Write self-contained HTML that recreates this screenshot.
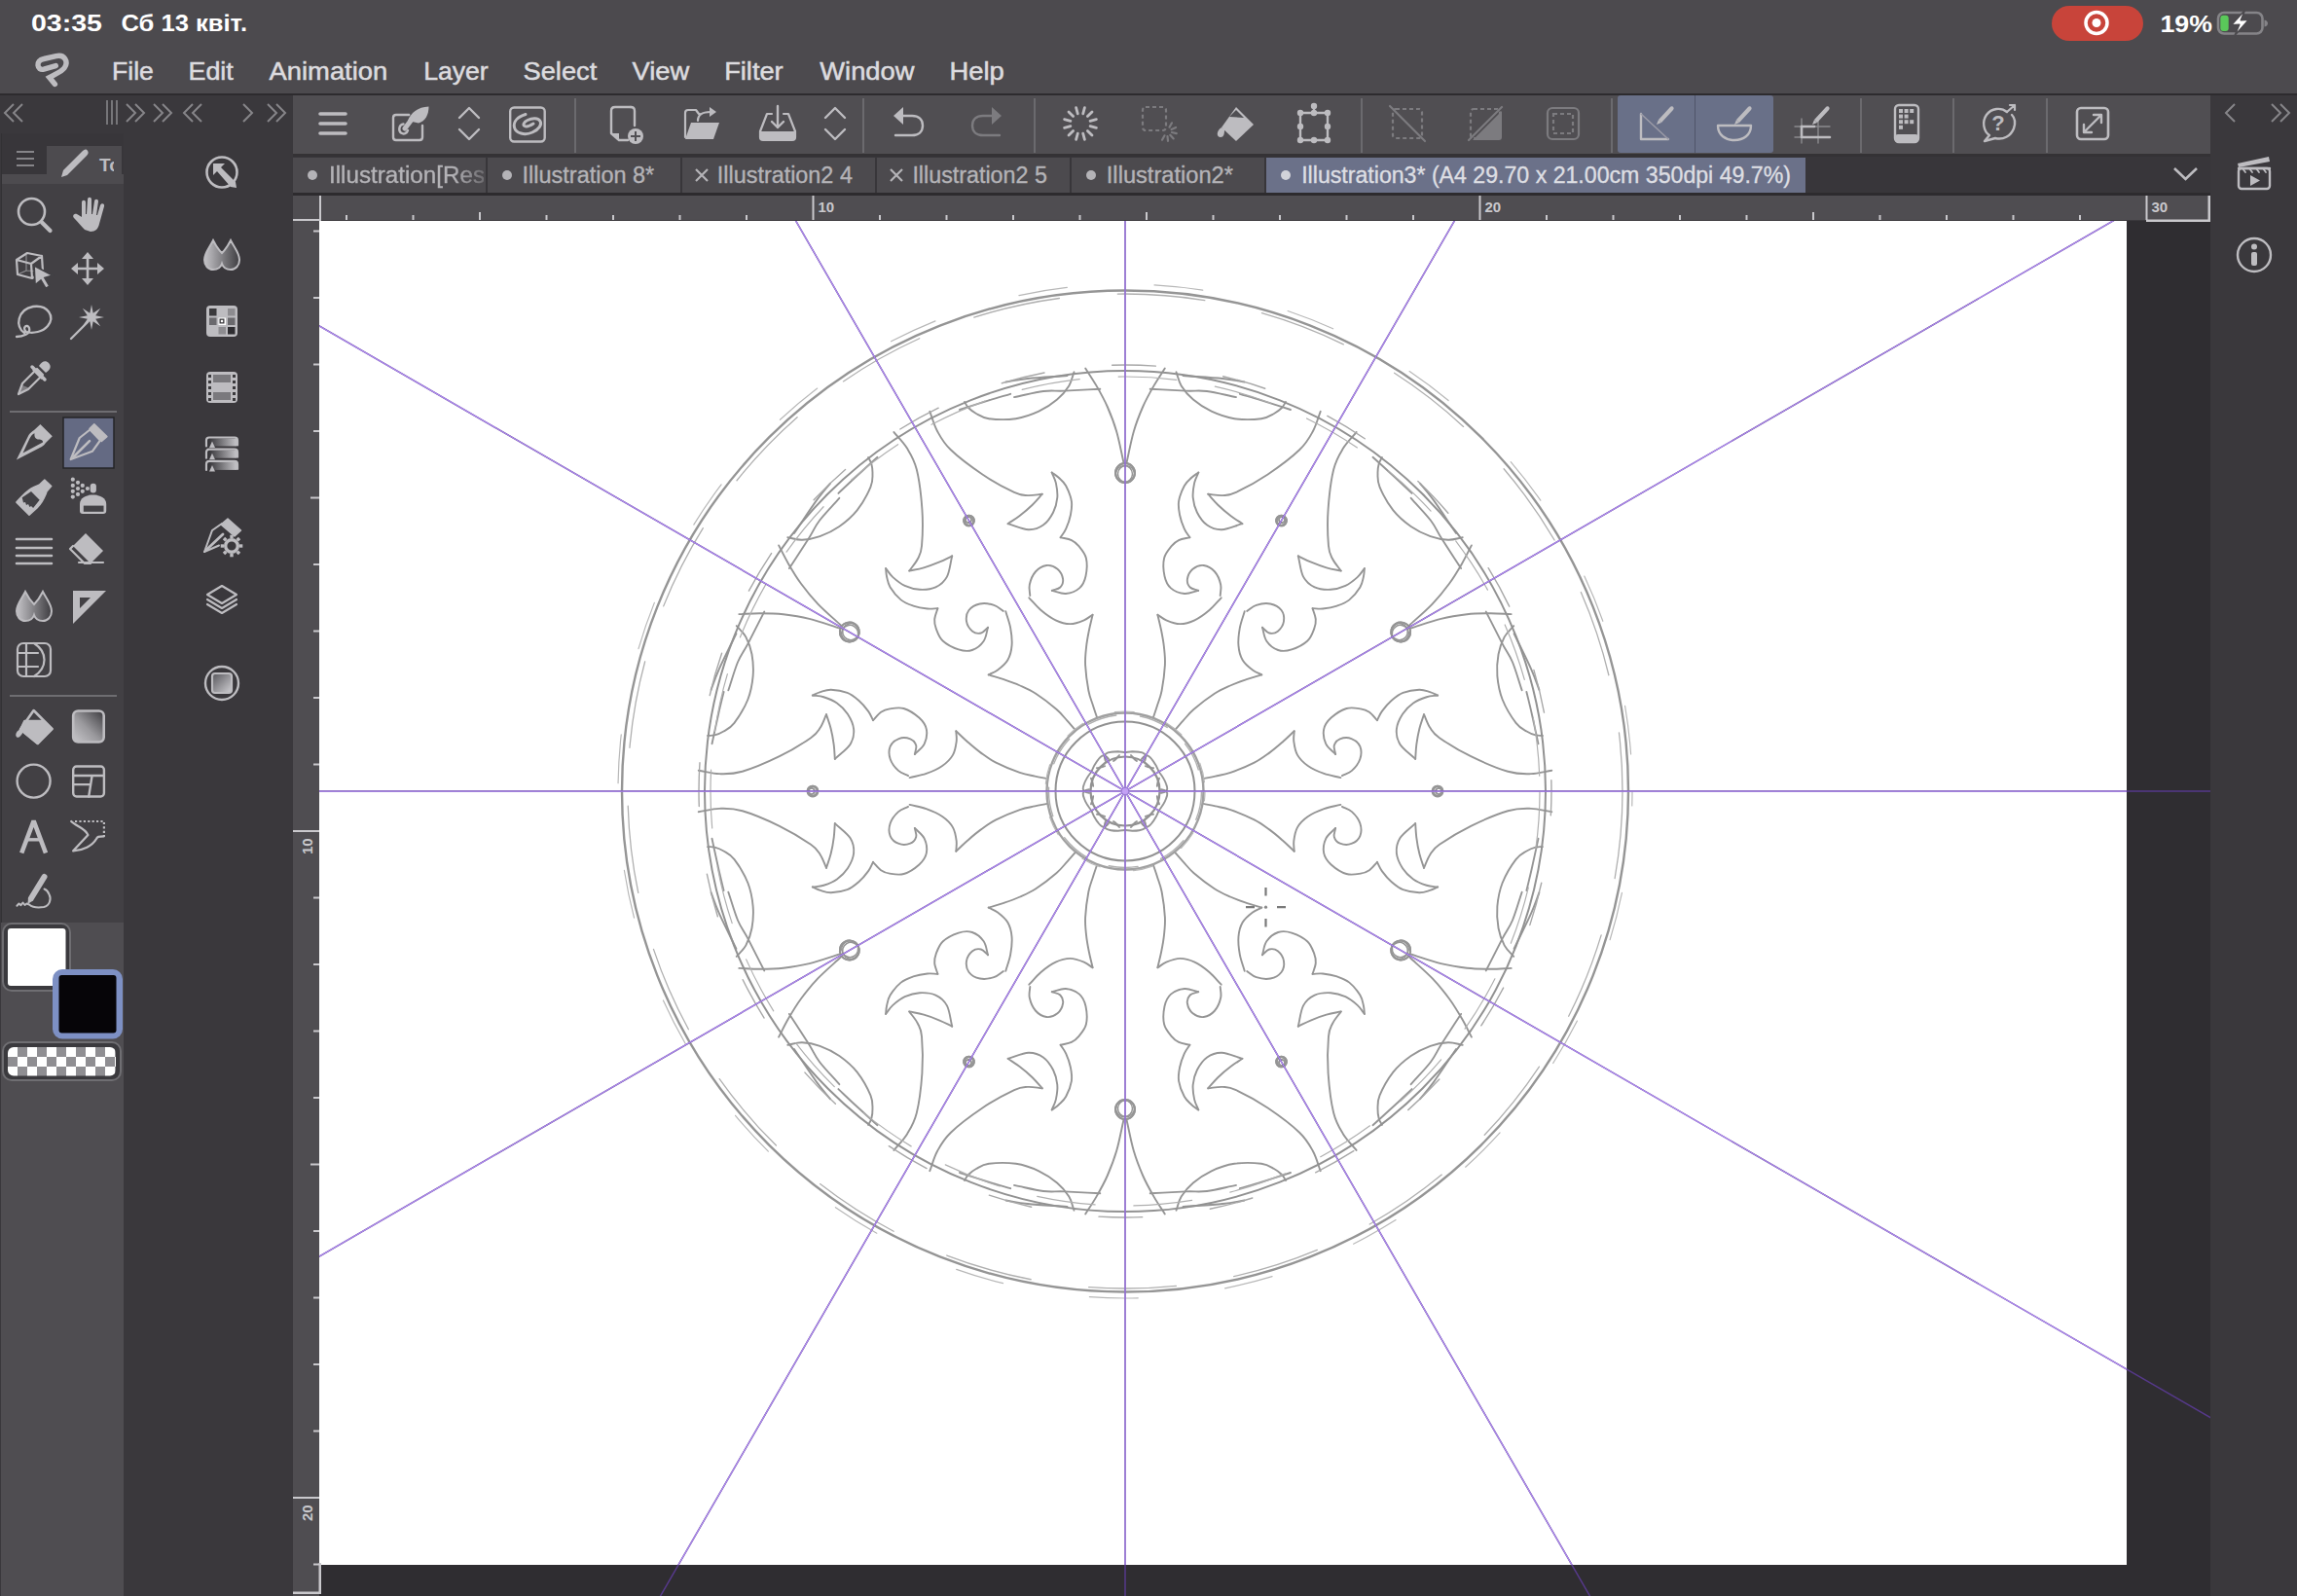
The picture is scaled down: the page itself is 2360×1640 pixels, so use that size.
<!DOCTYPE html>
<html><head><meta charset="utf-8"><style>
html,body{margin:0;padding:0;background:#3a383c;overflow:hidden;width:2360px;height:1640px}
svg{display:block}
text{font-family:"Liberation Sans",sans-serif}
</style></head><body>
<svg width="2360" height="1640" viewBox="0 0 2360 1640">
<rect x="0" y="0" width="2360" height="97" fill="#4c4a4e" />
<rect x="0" y="96" width="2360" height="2" fill="#2d2b2e" />
<rect x="0" y="98" width="2360" height="1542" fill="#3a383c" />
<defs><linearGradient id="gdrop" x1="0" y1="0" x2="1" y2="0"><stop offset="0" stop-color="#c4c3c7"/><stop offset="1" stop-color="#3e3d41"/></linearGradient>
<linearGradient id="gsq" x1="0" y1="0" x2="1" y2="1"><stop offset="0" stop-color="#56555a"/><stop offset="1" stop-color="#d0cfd3"/></linearGradient>
<linearGradient id="gsq2" x1="0" y1="1" x2="1" y2="0"><stop offset="0" stop-color="#c8c7cb"/><stop offset="0.45" stop-color="#9a999d"/><stop offset="1" stop-color="#3a393d"/></linearGradient>
<linearGradient id="gbar" x1="0" y1="0" x2="1" y2="0"><stop offset="0" stop-color="#2e2d31"/><stop offset="1" stop-color="#c4c3c7"/></linearGradient>
<pattern id="chk" x="8" y="1076" width="20" height="20" patternUnits="userSpaceOnUse"><rect width="20" height="20" fill="#ffffff"/><rect x="10" y="0" width="10" height="10" fill="#8f8e92"/><rect x="0" y="10" width="10" height="10" fill="#8f8e92"/></pattern></defs>
<text x="32" y="32" font-size="24" fill="#ffffff" font-weight="bold" textLength="73" lengthAdjust="spacingAndGlyphs">03:35</text>
<text x="124.5" y="32" font-size="24" fill="#ffffff" font-weight="bold" textLength="129.5" lengthAdjust="spacingAndGlyphs">Сб 13 квіт.</text>
<rect x="2108" y="6" width="94" height="36" rx="18" fill="#c8443a"/>
<circle cx="2154" cy="23.5" r="11" fill="none" stroke="#fff" stroke-width="3.5"/><circle cx="2154" cy="23.5" r="4.5" fill="#fff"/>
<text x="2219.5" y="33" font-size="24" fill="#ffffff" font-weight="bold" textLength="53.5" lengthAdjust="spacingAndGlyphs">19%</text>
<rect x="2279" y="13" width="45.5" height="21.5" rx="6" fill="none" stroke="#858488" stroke-width="2.6"/>
<path d="M2326.5 20.5 C2329 21 2330 22.5 2330 24 C2330 25.5 2329 27 2326.5 27.5 Z" fill="#858488"/>
<rect x="2281.3" y="15.7" width="8.4" height="16.2" rx="3" fill="#5ac85a"/>
<path d="M2306.5 10.5 L2292.5 25.8 L2300.8 25.2 L2296 36.5 L2310.5 20.2 L2302.3 20.8 Z" fill="#ffffff" stroke="#4c4a4e" stroke-width="1.6" stroke-linejoin="round"/>
<path d="M57.3 67.6 L45 71.2 C38 73 36 62 45 60.5 L57.6 57.6 C66 55.5 71 63 66 70 C63.5 73.5 58 75.5 50.7 79.6 L56.4 86.4" fill="none" stroke="#bdbcc0" stroke-width="5.4" stroke-linecap="round" stroke-linejoin="miter"/>
<text x="115.1" y="82" font-size="25" fill="#dcdbdf" font-weight="normal" stroke="#dcdbdf" stroke-width="0.5" textLength="42.8" lengthAdjust="spacingAndGlyphs">File</text>
<text x="193.5" y="82" font-size="25" fill="#dcdbdf" font-weight="normal" stroke="#dcdbdf" stroke-width="0.5" textLength="46.3" lengthAdjust="spacingAndGlyphs">Edit</text>
<text x="276.6" y="82" font-size="25" fill="#dcdbdf" font-weight="normal" stroke="#dcdbdf" stroke-width="0.5" textLength="121.6" lengthAdjust="spacingAndGlyphs">Animation</text>
<text x="435.2" y="82" font-size="25" fill="#dcdbdf" font-weight="normal" stroke="#dcdbdf" stroke-width="0.5" textLength="66.5" lengthAdjust="spacingAndGlyphs">Layer</text>
<text x="537.5999999999999" y="82" font-size="25" fill="#dcdbdf" font-weight="normal" stroke="#dcdbdf" stroke-width="0.5" textLength="75.6" lengthAdjust="spacingAndGlyphs">Select</text>
<text x="649.4" y="82" font-size="25" fill="#dcdbdf" font-weight="normal" stroke="#dcdbdf" stroke-width="0.5" textLength="58.8" lengthAdjust="spacingAndGlyphs">View</text>
<text x="744.1999999999999" y="82" font-size="25" fill="#dcdbdf" font-weight="normal" stroke="#dcdbdf" stroke-width="0.5" textLength="60.5" lengthAdjust="spacingAndGlyphs">Filter</text>
<text x="842.3" y="82" font-size="25" fill="#dcdbdf" font-weight="normal" stroke="#dcdbdf" stroke-width="0.5" textLength="97.2" lengthAdjust="spacingAndGlyphs">Window</text>
<text x="975.4" y="82" font-size="25" fill="#dcdbdf" font-weight="normal" stroke="#dcdbdf" stroke-width="0.5" textLength="56.4" lengthAdjust="spacingAndGlyphs">Help</text>
<path d="M14 107 L5 116 L14 125" fill="none" stroke="#868589" stroke-width="2"/><path d="M23 107 L14 116 L23 125" fill="none" stroke="#868589" stroke-width="2"/>
<path d="M130 107 L139 116 L130 125" fill="none" stroke="#868589" stroke-width="2"/><path d="M139 107 L148 116 L139 125" fill="none" stroke="#868589" stroke-width="2"/>
<path d="M158 107 L167 116 L158 125" fill="none" stroke="#868589" stroke-width="2"/><path d="M167 107 L176 116 L167 125" fill="none" stroke="#868589" stroke-width="2"/>
<path d="M198 107 L189 116 L198 125" fill="none" stroke="#868589" stroke-width="2"/><path d="M207 107 L198 116 L207 125" fill="none" stroke="#868589" stroke-width="2"/>
<path d="M250 107 L259 116 L250 125" fill="none" stroke="#868589" stroke-width="2"/>
<path d="M275 107 L284 116 L275 125" fill="none" stroke="#868589" stroke-width="2"/><path d="M284 107 L293 116 L284 125" fill="none" stroke="#868589" stroke-width="2"/>
<path d="M110 103 L110 128 M115 103 L115 128 M120 103 L120 128" stroke="#868589" stroke-width="1.6"/>
<path d="M2296 107 L2287 116 L2296 125" fill="none" stroke="#868589" stroke-width="2"/>
<path d="M2334 107 L2343 116 L2334 125" fill="none" stroke="#868589" stroke-width="2"/><path d="M2343 107 L2352 116 L2343 125" fill="none" stroke="#868589" stroke-width="2"/>
<rect x="1" y="137" width="126" height="1503" fill="#424044" />
<rect x="1" y="137" width="126" height="42" fill="#38363a" />
<rect x="48" y="150" width="77" height="29" fill="#4d4b4f" />
<rect x="1" y="179" width="126" height="10" fill="#4d4b4f" />
<rect x="1" y="137" width="1" height="1503" fill="#323134" />
<path d="M17 156 L35 156 M17 163 L35 163 M17 170 L35 170" stroke="#868589" stroke-width="2"/>
<path d="M63 182 L65 175 L85 155 C87 153 89 153 90 155 C91 156 91 158 89 160 L69 180 Z" fill="#bdbcc0"/>
<clipPath id="tabT"><rect x="95" y="150" width="22" height="29"/></clipPath>
<text x="102" y="176" font-size="19" fill="#bdbcc0" font-weight="bold" clip-path="url(#tabT)">Tc</text>
<rect x="10" y="422" width="110" height="2" fill="#6e6d71" />
<rect x="10" y="714" width="110" height="2" fill="#6e6d71" />
<rect x="65" y="429" width="52" height="52" fill="#646a83" stroke="#252427" stroke-width="1.5"/>
<g transform="translate(35,220)" ><circle cx="-2.5" cy="-2.5" r="13.5" fill="none" stroke="#bdbcc0" stroke-width="2.6" stroke-linecap="round" stroke-linejoin="round"/><path d="M8 8.5 L16.5 17" fill="none" stroke="#bdbcc0" stroke-width="4.2" stroke-linecap="round" stroke-linejoin="round"/></g>
<g transform="translate(90,222)" ><path d="M-3 14 C-7 10 -10 6 -14 2 C-16 0 -14 -3 -11 -2 L-6 1 L-6 -14 C-6 -17 -2 -17 -2 -14 L-2 -2 L-1 -2 L0 -17 C0 -20 4 -20 4 -17 L4 -2 L5 -2 L7 -15 C7 -18 11 -18 11 -15 L9 -1 L10 -1 L13 -11 C14 -14 18 -13 17 -10 L12 8 C11 13 8 16 3 16 Z" fill="#bdbcc0"/></g>
<g transform="translate(35,276)" ><path d="M-18 -9 L-7 -16 L8 -13 L9 3 L-2 10 L-17 6 Z M-18 -9 L-3 -5 L8 -13 M-3 -5 L-2 10" fill="none" stroke="#bdbcc0" stroke-width="2.2" stroke-linecap="round" stroke-linejoin="round"/><path d="M-8 -14 L-8 2 L-17 6 M-8 2 L9 3" stroke="#bdbcc0" stroke-width="1.2" opacity="0.6" fill="none"/><path d="M0 -3 L19 7 L11 9.5 L16 18 L12 20.5 L7 12 L1 17 Z" fill="#bdbcc0" stroke="#424145" stroke-width="1.8"/></g>
<g transform="translate(90,276)" ><path d="M0 -17 L-6 -10 L6 -10 Z M0 17 L-6 10 L6 10 Z M-17 0 L-10 -6 L-10 6 Z M17 0 L10 -6 L10 6 Z" fill="#bdbcc0"/><path d="M0 -11 L0 11 M-11 0 L11 0" fill="none" stroke="#bdbcc0" stroke-width="2.6" stroke-linecap="round" stroke-linejoin="round"/></g>
<g transform="translate(35,332)" ><path d="M-10 10 C-20 4 -17 -14 -1 -17 C14 -19 22 -7 14 3 C9 9 -1 11 -8 9 C-13 5 -7 0 -5 5 C-3 11 -12 14 -18 14" fill="none" stroke="#bdbcc0" stroke-width="2.3" stroke-linecap="round" stroke-linejoin="round"/></g>
<g transform="translate(90,331)" ><path d="M17.0 -5.0 L8.2 -3.3 L13.2 4.2 L5.7 -0.8 L4.0 8.0 L2.3 -0.8 L-5.2 4.2 L-0.2 -3.3 L-9.0 -5.0 L-0.2 -6.7 L-5.2 -14.2 L2.3 -9.2 L4.0 -18.0 L5.7 -9.2 L13.2 -14.2 L8.2 -6.7 Z" fill="#bdbcc0"/><path d="M0 0 L-17 17" fill="none" stroke="#bdbcc0" stroke-width="2.3" stroke-linecap="round" stroke-linejoin="round"/></g>
<g transform="translate(35,388)" ><path d="M-16 17 L-12 6 L3 -9 L9 -3 L-6 12 Z" fill="none" stroke="#bdbcc0" stroke-width="2.2" stroke-linecap="round" stroke-linejoin="round"/><path d="M-15 16 L-12 8 L-4 11 Z" fill="#bdbcc0" opacity="0.5"/><path d="M0 -8 L8 0 M-2 -11 L11 2" fill="none" stroke="#bdbcc0" stroke-width="3.5" stroke-linecap="round" stroke-linejoin="round"/><path d="M5 -12 C8 -17 12 -18 15 -15 C18 -12 17 -8 12 -5 Z" fill="#bdbcc0"/></g>
<g transform="translate(35,454)" ><path d="M-18.1 18.4 L-5.5 -7 C-4 -9 -2 -11 0 -12 L6.4 -18.1 L18.8 -5.7 L12 1 C10 4 8 5 6 6 Z M-11.5 11.5 L-4.5 -3.5 C-3.5 -5.5 -1.5 -8.5 0.5 -8.8 C0 -5 1.5 -2.5 5 -2.5 C7 -2.5 9.5 -1.5 9 0.5 Z" fill="#bdbcc0" fill-rule="evenodd"/></g>
<g transform="translate(91,454)" ><path d="M-18.3 18 L-9.3 -4 L1.5 -12.5 L12 -1.5 L3.8 9.8 Z" fill="none" stroke="#bdbcc0" stroke-width="2.2" stroke-linejoin="round"/><path d="M1 -13.5 L5.8 -18.3 L18.9 -5.4 L13.4 -0.6 Z" fill="#bdbcc0" stroke="#bdbcc0" stroke-width="1.5" stroke-linejoin="round"/><path d="M-15 15 L1 -0.9" fill="none" stroke="#bdbcc0" stroke-width="2.6" stroke-linecap="round" stroke-linejoin="round"/></g>
<g transform="translate(35,511)" ><path d="M-18.1 5.1 C-12 -2 -6 -8 0 -10.5 L5.3 -12.8 L10.8 -17.9 L17.7 -11.4 L13 -6 C11 0 8 6 3 11 L-5 18.2 Z" fill="#bdbcc0" stroke="#bdbcc0" stroke-width="1.5" stroke-linejoin="round"/><path d="M-12.3 0.3 L-3 -5.9 L5.7 2.7 L-0.9 11 L-3 9 L-4.5 10 L-6 7 L-8 8 L-9 5 L-11 5.5 Z" fill="#424145"/></g>
<g transform="translate(90,510)" ><circle cx="-15.2" cy="-17.3" r="2.1" fill="#bdbcc0"/><circle cx="-10" cy="-14.2" r="2.1" fill="#bdbcc0"/><circle cx="-15.2" cy="-11.1" r="2.1" fill="#bdbcc0"/><circle cx="-5.2" cy="-11.1" r="2.1" fill="#bdbcc0"/><circle cx="-10" cy="-8" r="2.1" fill="#bdbcc0"/><circle cx="-0.1" cy="-8" r="2.1" fill="#bdbcc0"/><circle cx="-15.2" cy="-5.2" r="2.1" fill="#bdbcc0"/><circle cx="-5.2" cy="-5.2" r="2.1" fill="#bdbcc0"/><circle cx="-10" cy="-2.1" r="2.1" fill="#bdbcc0"/><circle cx="-15.2" cy="0.6" r="2.1" fill="#bdbcc0"/><rect x="2.7" y="-13.2" width="6.2" height="9.7" rx="3" fill="#bdbcc0"/><path d="M-8 15 L-8 8 C-8 2 -2 -1.4 5.5 -1.4 C13 -1.4 19.2 2 19.2 8 L19.2 15 C19.2 17 18 18 16 18 L-5 18 C-7 18 -8 17 -8 15 Z" fill="#bdbcc0"/><rect x="-4.2" y="9.6" width="20.7" height="6.2" fill="#424145"/></g>
<g transform="translate(35,566)" ><path d="M-18 -12 L18 -12 M-18 -3 L18 -3 M-18 5 L18 5 M-18 13 L18 13" fill="none" stroke="#bdbcc0" stroke-width="2.6" stroke-linecap="round" stroke-linejoin="round"/></g>
<g transform="translate(90,566)" ><path d="M-2 -18 L16 0 L3 13 L-15 -5 Z" fill="#bdbcc0"/><path d="M-15 -5 L-18 -2 L-3 13 L3 13" fill="none" stroke="#bdbcc0" stroke-width="2.2" stroke-linecap="round" stroke-linejoin="round"/><path d="M-9 12 L16 12" fill="none" stroke="#bdbcc0" stroke-width="2.2" stroke-linecap="round" stroke-linejoin="round"/></g>
<g transform="translate(35,623)" ><path d="M-9 -15 C-13 -7 -18 -2 -18 5 C-18 11 -14 15 -9 15 C-4 15 -1 12 0 9 C1 12 4 15 9 15 C14 15 18 11 18 5 C18 -2 13 -7 9 -15 C6 -9 3 -5 0 -2 C-3 -5 -6 -9 -9 -15 Z" fill="url(#gdrop)" stroke="#bdbcc0" stroke-width="2"/></g>
<g transform="translate(91,623)" ><path d="M-16 -16 L18 -16 L-16 18 Z M-9 -9 L-9 2 L2 -9 Z" fill="#bdbcc0" fill-rule="evenodd"/></g>
<g transform="translate(35,678)" ><rect x="-17" y="-17" width="34" height="34" rx="6" fill="none" stroke="#bdbcc0" stroke-width="2.2" stroke-linecap="round" stroke-linejoin="round"/><path d="M-8 -17 L-8 17 M-17 -7 L4 -7 M-17 7 L4 7 M0 -17 C14 -8 14 8 0 17" fill="none" stroke="#bdbcc0" stroke-width="2.2" stroke-linecap="round" stroke-linejoin="round"/></g>
<g transform="translate(35,747)" ><path d="M-0.4 -17 L18.5 2 L3.7 17 L-14 2.5 Z" fill="none" stroke="#bdbcc0" stroke-width="2.6" stroke-linejoin="round"/><path d="M-14 2.5 L-9.8 -6.3 L9.5 -6.3 L18.5 2 L3.7 17 Z" fill="#bdbcc0" stroke="#bdbcc0" stroke-width="2" stroke-linejoin="round"/><path d="M-12.5 1.5 C-18 3.5 -20 8 -18 10.3 C-16 12 -13.5 9.5 -11.5 5.5 Z" fill="#bdbcc0"/></g>
<g transform="translate(90,747)" ><rect x="-14.8" y="-16.5" width="31.5" height="32" rx="5" fill="url(#gsq2)" stroke="#bdbcc0" stroke-width="2.6"/></g>
<g transform="translate(35,802)" ><circle cx="-0.4" cy="0.6" r="17" fill="none" stroke="#bdbcc0" stroke-width="2.4" stroke-linecap="round" stroke-linejoin="round"/></g>
<g transform="translate(90,802)" ><rect x="-14.8" y="-14.5" width="31.7" height="31" rx="3.5" fill="none" stroke="#bdbcc0" stroke-width="2.4" stroke-linecap="round" stroke-linejoin="round"/><path d="M-14.8 -5 L16.9 -5 M-14.8 4.1 L1.8 4.1 M4.6 -5 L1.2 16.5" fill="none" stroke="#bdbcc0" stroke-width="2.4" stroke-linecap="round" stroke-linejoin="round"/></g>
<g transform="translate(35,859)" ><path d="M-12.8 17.5 L-0.4 -15.5 L12 17.5" fill="none" stroke="#bdbcc0" stroke-width="4.6" stroke-linejoin="bevel"/><path d="M-7.6 3.8 L6.8 3.8" stroke="#bdbcc0" stroke-width="3.4"/></g>
<g transform="translate(90,859)" ><path d="M-13 -15 L16.9 -15 L16.9 0" fill="none" stroke="#bdbcc0" stroke-width="2.2" stroke-dasharray="2.2 2.2"/><path d="M-16.8 -15 C-12 -10 -2 -8 0.4 -1 L-14.8 15.3 C-5 15 5 10 9 3 C10 1 11 0.3 16.9 0.3" fill="none" stroke="#bdbcc0" stroke-width="2.3" stroke-linecap="round" stroke-linejoin="round"/></g>
<g transform="translate(35,914)" ><path d="M-17.6 16.7 L-15.5 14.5 L-13.5 16.2 L-11.5 13.5 L-9.5 16 L-7.5 14.5 L-5 15.5 C-2 18 4 19 10 18 C16 16.5 18 10 15.5 5 C14 1.5 12 0 10.5 -0.5" fill="none" stroke="#bdbcc0" stroke-width="2" stroke-linecap="round" stroke-linejoin="round"/><path d="M-3 9 L10.5 -13" stroke="#bdbcc0" stroke-width="6" stroke-linecap="round"/><path d="M-6.5 15 L-6 8 L-0.5 11 Z" fill="#bdbcc0"/></g>
<rect x="1" y="948" width="126" height="692" fill="#4f4d51" />
<rect x="3" y="949" width="69" height="69" rx="9" fill="#3b3a3e" stroke="#6f6e72" stroke-width="2"/>
<rect x="8" y="954" width="59.5" height="59" rx="3" fill="#ffffff"/>
<rect x="54" y="996" width="72" height="71.5" rx="10" fill="#7d90c4"/><rect x="60.5" y="1002" width="59" height="59.5" rx="3" fill="#060508"/>
<rect x="3" y="1071" width="121" height="39" rx="9" fill="#3b3a3e" stroke="#6f6e72" stroke-width="2"/>
<rect x="8" y="1076" width="111" height="29.5" rx="6" fill="url(#chk)"/>
<g transform="translate(228,177)" ><circle cx="0" cy="0" r="15.5" fill="none" stroke="#bdbcc0" stroke-width="2.6" stroke-linecap="round" stroke-linejoin="round"/><path d="M-9 -9 L3 -9 L-1 -5 L14 10 L15 16 L9 15 L-5 -1 L-9 3 Z" fill="#bdbcc0"/></g>
<g transform="translate(228,262)" ><path d="M-9 -15 C-13 -7 -18 -2 -18 5 C-18 11 -14 15 -9 15 C-4 15 -1 12 0 9 C1 12 4 15 9 15 C14 15 18 11 18 5 C18 -2 13 -7 9 -15 C6 -9 3 -5 0 -2 C-3 -5 -6 -9 -9 -15 Z" fill="url(#gdrop)" stroke="#bdbcc0" stroke-width="2"/></g>
<g transform="translate(228,330)" ><rect x="-16" y="-16" width="32" height="32" rx="4" fill="#bdbcc0"/><rect x="-13.0" y="-13.0" width="7.5" height="7.5" fill="#3a393c"/><rect x="6.0" y="-13.0" width="7.5" height="7.5" fill="#8d8c90"/><rect x="-13.0" y="-3.5" width="7.5" height="7.5" fill="#6a696d"/><rect x="-3.5" y="-3.5" width="7.5" height="7.5" fill="#ffffff"/><rect x="6.0" y="-3.5" width="7.5" height="7.5" fill="#6a696d"/><rect x="-3.5" y="6.0" width="7.5" height="7.5" fill="#8d8c90"/><rect x="6.0" y="6.0" width="7.5" height="7.5" fill="#2e2d31"/><rect x="-2.5" y="-2.5" width="5" height="5" fill="#3a393c"/><rect x="-1.2" y="-1.2" width="2.4" height="2.4" fill="#fff"/></g>
<g transform="translate(228,398)" ><rect x="-16" y="-16" width="32" height="32" rx="4" fill="#bdbcc0"/><rect x="-9" y="-13" width="18" height="8" fill="#7a797d"/><rect x="-9" y="5" width="18" height="8" fill="#7a797d"/><rect x="-14" y="-13" width="3" height="3" fill="#3a393c"/><rect x="11" y="-13" width="3" height="3" fill="#3a393c"/><rect x="-14" y="-7" width="3" height="3" fill="#3a393c"/><rect x="11" y="-7" width="3" height="3" fill="#3a393c"/><rect x="-14" y="-1" width="3" height="3" fill="#3a393c"/><rect x="11" y="-1" width="3" height="3" fill="#3a393c"/><rect x="-14" y="5" width="3" height="3" fill="#3a393c"/><rect x="11" y="5" width="3" height="3" fill="#3a393c"/><rect x="-14" y="11" width="3" height="3" fill="#3a393c"/><rect x="11" y="11" width="3" height="3" fill="#3a393c"/></g>
<g transform="translate(228,466)" ><rect x="-15" y="-15.5" width="30" height="8" fill="url(#gbar)"/><path d="M-16 -7.5 L-16 -13.5 Q-16 -16.5 -13 -16.5 L13 -16.5 Q16 -16.5 16 -13.5 L16 -8.5" fill="none" stroke="#bdbcc0" stroke-width="2.2" stroke-linecap="round"/><path d="M-13 -6.0 L-10 -12.5 L-7 -6.0 Z" fill="#bdbcc0"/><rect x="-15" y="-3.3000000000000007" width="30" height="8" fill="url(#gbar)"/><path d="M-16 4.699999999999999 L-16 -1.3000000000000007 Q-16 -4.300000000000001 -13 -4.300000000000001 L13 -4.300000000000001 Q16 -4.300000000000001 16 -1.3000000000000007 L16 3.6999999999999993" fill="none" stroke="#bdbcc0" stroke-width="2.2" stroke-linecap="round"/><path d="M-13 6.199999999999999 L-10 -0.3000000000000007 L-7 6.199999999999999 Z" fill="#bdbcc0"/><rect x="-15" y="8.899999999999999" width="30" height="8" fill="url(#gbar)"/><path d="M-16 16.9 L-16 10.899999999999999 Q-16 7.899999999999999 -13 7.899999999999999 L13 7.899999999999999 Q16 7.899999999999999 16 10.899999999999999 L16 15.899999999999999" fill="none" stroke="#bdbcc0" stroke-width="2.2" stroke-linecap="round"/><path d="M-13 18.4 L-10 11.899999999999999 L-7 18.4 Z" fill="#bdbcc0"/></g>
<g transform="translate(229,551)" ><path d="M-19 16 L-11 -6 L-1 -13" fill="none" stroke="#bdbcc0" stroke-width="2" stroke-linecap="round" stroke-linejoin="round"/><path d="M-19 16 L-4 9.5" fill="none" stroke="#bdbcc0" stroke-width="2" stroke-linecap="round" stroke-linejoin="round"/><path d="M-2 -12 L5 -18 L18.5 -6 L12 0 Z" fill="#bdbcc0" stroke="#bdbcc0" stroke-width="1.5" stroke-linejoin="round"/><path d="M-17 14 L0 -2" fill="none" stroke="#bdbcc0" stroke-width="2.8" stroke-linecap="round" stroke-linejoin="round"/><circle cx="9" cy="10" r="6.3" fill="none" stroke="#bdbcc0" stroke-width="3.4"/><path d="M17.0 10.0 L20.3 10.0" stroke="#bdbcc0" stroke-width="3.4"/><path d="M14.7 15.7 L17.0 18.0" stroke="#bdbcc0" stroke-width="3.4"/><path d="M9.0 18.0 L9.0 21.3" stroke="#bdbcc0" stroke-width="3.4"/><path d="M3.3 15.7 L1.0 18.0" stroke="#bdbcc0" stroke-width="3.4"/><path d="M1.0 10.0 L-2.3 10.0" stroke="#bdbcc0" stroke-width="3.4"/><path d="M3.3 4.3 L1.0 2.0" stroke="#bdbcc0" stroke-width="3.4"/><path d="M9.0 2.0 L9.0 -1.3" stroke="#bdbcc0" stroke-width="3.4"/><path d="M14.7 4.3 L17.0 2.0" stroke="#bdbcc0" stroke-width="3.4"/></g>
<g transform="translate(228,618)" ><path d="M0 -16 L15 -7 L0 2 L-15 -7 Z" fill="none" stroke="#bdbcc0" stroke-width="2.2" stroke-linecap="round" stroke-linejoin="round"/><path d="M-15 -2 L0 7 L15 -2" fill="none" stroke="#bdbcc0" stroke-width="2.2" stroke-linecap="round" stroke-linejoin="round"/><path d="M-15 3 L0 12 L15 3" fill="none" stroke="#bdbcc0" stroke-width="2.2" stroke-linecap="round" stroke-linejoin="round"/></g>
<g transform="translate(228,702)" ><circle cx="0" cy="0" r="17" fill="none" stroke="#bdbcc0" stroke-width="2.4" stroke-linecap="round" stroke-linejoin="round"/><rect x="-10" y="-10" width="20" height="20" rx="3" fill="url(#gsq)" stroke="#bdbcc0" stroke-width="2.2"/></g>
<rect x="301" y="98" width="1970" height="60" fill="#504e52" />
<rect x="301" y="158" width="1970" height="3.5" fill="#343235" />
<rect x="1662" y="98" width="160" height="59" rx="3" fill="#697088"/>
<rect x="1741" y="98" width="1" height="59" fill="#4f5469" />
<rect x="590" y="101" width="2" height="56" fill="#6b6a6e" />
<rect x="886" y="101" width="2" height="56" fill="#6b6a6e" />
<rect x="1062" y="101" width="2" height="56" fill="#6b6a6e" />
<rect x="1398" y="101" width="2" height="56" fill="#6b6a6e" />
<rect x="1655" y="101" width="2" height="56" fill="#6b6a6e" />
<rect x="1911" y="101" width="2" height="56" fill="#6b6a6e" />
<rect x="2006" y="101" width="2" height="56" fill="#6b6a6e" />
<rect x="2102" y="101" width="2" height="56" fill="#6b6a6e" />
<g transform="translate(342,127)" ><path d="M-13 -10 L13 -10 M-13 0 L13 0 M-13 10 L13 10" fill="none" stroke="#bdbcc0" stroke-width="3.6" stroke-linecap="round" stroke-linejoin="round"/></g>
<g transform="translate(422,127)" ><path d="M-1.8 -9 L-15 -9 C-17 -9 -18 -8 -18 -6 L-18 14 C-18 16 -17 17 -15 17 L9 17 C11 17 12 16 12 14 L12 2" fill="none" stroke="#bdbcc0" stroke-width="2.4" stroke-linecap="round" stroke-linejoin="round"/><path d="M-3 -3 C0 -11 7 -17 18.5 -17.5 C18.5 -9 15 -2.5 8 -0.5 Z" fill="#bdbcc0"/><path d="M3 -7 L-6 5" stroke="#bdbcc0" stroke-width="5" stroke-linecap="round"/><path d="M-7.5 0.5 C-12 1 -13 7 -10 9.5 C-7 11.5 -4 10 -3 7" fill="none" stroke="#bdbcc0" stroke-width="2.4" stroke-linecap="round" stroke-linejoin="round"/></g>
<g transform="translate(482,127)" ><path d="M-10 -6 L0 -16 L10 -6 M-10 6 L0 16 L10 6" fill="none" stroke="#bdbcc0" stroke-width="2.4" stroke-linecap="round" stroke-linejoin="round"/></g>
<g transform="translate(542,127)" ><rect x="-17.8" y="-16.5" width="35.5" height="35" rx="4" fill="none" stroke="#bdbcc0" stroke-width="2.4" stroke-linecap="round" stroke-linejoin="round"/><path d="M-2 -9.5 C-10 -7 -15 -2 -13.5 4 C-12 10 -3 12.5 5 9 C12 6 15 1 13 -2.5 C11 -6 5 -6 0 -3.5 C-4 -1.5 -5 1.5 -3 2.5 C-1 3.5 3 2 6 0" fill="none" stroke="#bdbcc0" stroke-width="3" stroke-linecap="round" stroke-linejoin="round"/></g>
<g transform="translate(642,127)" ><path d="M6 -17 L-10 -17 C-13 -17 -14 -16 -14 -13 L-14 10 L-6 17 L3 17" fill="none" stroke="#bdbcc0" stroke-width="2.4" stroke-linecap="round" stroke-linejoin="round"/><path d="M10 2 L10 -13 C10 -16 9 -17 6 -17" fill="none" stroke="#bdbcc0" stroke-width="2.4" stroke-linecap="round" stroke-linejoin="round"/><path d="M-14 10 L-6 10 L-6 17 Z" fill="#bdbcc0"/><circle cx="11" cy="13" r="8" fill="#bdbcc0"/><path d="M11 8 L11 18 M6 13 L16 13" stroke="#504f53" stroke-width="2"/></g>
<g transform="translate(721,127)" ><path d="M-17 14 L-17 -11 C-17 -13 -16 -14 -14 -14 L-6 -14 L-3 -10 L-2 -10" fill="none" stroke="#bdbcc0" stroke-width="2.2" stroke-linecap="round" stroke-linejoin="round"/><path d="M-17 16 L-11 -1 L18 -1 L12 16 Z" fill="#bdbcc0"/><path d="M-4 -3 C-4 -10 2 -12 9 -12" fill="none" stroke="#bdbcc0" stroke-width="2.2" stroke-linecap="round" stroke-linejoin="round"/><path d="M8 -17 L15 -12 L8 -7 Z" fill="#bdbcc0"/></g>
<g transform="translate(799,127)" ><path d="M-6 -10 L-11 -10 L-18 8 L-18 14 C-18 16 -17 17 -15 17 L15 17 C17 17 18 16 18 14 L18 8 L11 -10 L6 -10" fill="none" stroke="#bdbcc0" stroke-width="2.2" stroke-linecap="round" stroke-linejoin="round"/><rect x="-17" y="8" width="34" height="8" fill="#bdbcc0"/><path d="M0 -18 L0 4 M-6 -2 L0 4 L6 -2" fill="none" stroke="#bdbcc0" stroke-width="2.4" stroke-linecap="round" stroke-linejoin="round"/></g>
<g transform="translate(858,127)" ><path d="M-10 -6 L0 -16 L10 -6 M-10 6 L0 16 L10 6" fill="none" stroke="#bdbcc0" stroke-width="2.4" stroke-linecap="round" stroke-linejoin="round"/></g>
<g transform="translate(934,127)" ><path d="M-8 -8 L3 -8 C10 -8 14 -4 14 2 C14 8 10 12 3 12 L-14 12" fill="none" stroke="#bdbcc0" stroke-width="2.4" stroke-linecap="round" stroke-linejoin="round"/><path d="M-16 -8 L-6 -17 L-6 1 Z" fill="#bdbcc0"/></g>
<g transform="translate(1013,127)" ><path d="M8 -8 L-3 -8 C-10 -8 -14 -4 -14 2 C-14 8 -10 12 -3 12 L14 12" fill="none" stroke="#7c7b7f" stroke-width="2.4" stroke-linecap="round" stroke-linejoin="round"/><path d="M16 -8 L6 -17 L6 1 Z" fill="#7c7b7f"/></g>
<g transform="translate(1110,127)" ><path d="M10.1 2.7 L16.4 4.4" fill="none" stroke="#bdbcc0" stroke-width="2.8" stroke-linecap="round" stroke-linejoin="round"/><path d="M7.4 7.4 L12.0 12.0" fill="none" stroke="#bdbcc0" stroke-width="2.8" stroke-linecap="round" stroke-linejoin="round"/><path d="M2.7 10.1 L4.4 16.4" fill="none" stroke="#bdbcc0" stroke-width="2.8" stroke-linecap="round" stroke-linejoin="round"/><path d="M-2.7 10.1 L-4.4 16.4" fill="none" stroke="#bdbcc0" stroke-width="2.8" stroke-linecap="round" stroke-linejoin="round"/><path d="M-7.4 7.4 L-12.0 12.0" fill="none" stroke="#bdbcc0" stroke-width="2.8" stroke-linecap="round" stroke-linejoin="round"/><path d="M-10.1 2.7 L-16.4 4.4" fill="none" stroke="#bdbcc0" stroke-width="2.8" stroke-linecap="round" stroke-linejoin="round"/><path d="M-10.1 -2.7 L-16.4 -4.4" fill="none" stroke="#bdbcc0" stroke-width="2.8" stroke-linecap="round" stroke-linejoin="round"/><path d="M-7.4 -7.4 L-12.0 -12.0" fill="none" stroke="#bdbcc0" stroke-width="2.8" stroke-linecap="round" stroke-linejoin="round"/><path d="M-2.7 -10.1 L-4.4 -16.4" fill="none" stroke="#bdbcc0" stroke-width="2.8" stroke-linecap="round" stroke-linejoin="round"/><path d="M2.7 -10.1 L4.4 -16.4" fill="none" stroke="#bdbcc0" stroke-width="2.8" stroke-linecap="round" stroke-linejoin="round"/><path d="M7.4 -7.4 L12.0 -12.0" fill="none" stroke="#bdbcc0" stroke-width="2.8" stroke-linecap="round" stroke-linejoin="round"/><path d="M10.1 -2.7 L16.4 -4.4" fill="none" stroke="#bdbcc0" stroke-width="2.8" stroke-linecap="round" stroke-linejoin="round"/></g>
<g transform="translate(1191,127)" ><rect x="-17" y="-17" width="24" height="24" rx="3" fill="none" stroke="#7c7b7f" stroke-width="2.2" stroke-dasharray="4 3"/><path d="M10.5 3.7 L13.0 -0.7" fill="none" stroke="#7c7b7f" stroke-width="2.2" stroke-linecap="round" stroke-linejoin="round"/><path d="M12.6 6.0 L17.1 3.9" fill="none" stroke="#7c7b7f" stroke-width="2.2" stroke-linecap="round" stroke-linejoin="round"/><path d="M12.9 9.0 L17.8 10.1" fill="none" stroke="#7c7b7f" stroke-width="2.2" stroke-linecap="round" stroke-linejoin="round"/><path d="M11.3 11.7 L14.7 15.4" fill="none" stroke="#7c7b7f" stroke-width="2.2" stroke-linecap="round" stroke-linejoin="round"/><path d="M8.5 13.0 L9.0 17.9" fill="none" stroke="#7c7b7f" stroke-width="2.2" stroke-linecap="round" stroke-linejoin="round"/><path d="M5.5 12.3 L3.0 16.7" fill="none" stroke="#7c7b7f" stroke-width="2.2" stroke-linecap="round" stroke-linejoin="round"/></g>
<g transform="translate(1270,127)" ><path d="M0 -17 L18 1 L0 18 L-15 4 Z" fill="#bdbcc0"/><path d="M-7 -7 L0 -14 L8 -6 Z" fill="#504f53"/><path d="M-15 4 C-21 8 -20 14 -16 14 C-12 14 -12 9 -12 6 Z" fill="#bdbcc0"/></g>
<g transform="translate(1350,128)" ><rect x="-14" y="-12" width="28" height="28" fill="none" stroke="#bdbcc0" stroke-width="2.4" stroke-linecap="round" stroke-linejoin="round"/><path d="M0 -12 L0 -19" fill="none" stroke="#bdbcc0" stroke-width="2.4" stroke-linecap="round" stroke-linejoin="round"/><circle cx="-14" cy="-12" r="3.2" fill="#bdbcc0"/><circle cx="0" cy="-12" r="3.2" fill="#bdbcc0"/><circle cx="14" cy="-12" r="3.2" fill="#bdbcc0"/><circle cx="-14" cy="2" r="3.2" fill="#bdbcc0"/><circle cx="14" cy="2" r="3.2" fill="#bdbcc0"/><circle cx="-14" cy="16" r="3.2" fill="#bdbcc0"/><circle cx="0" cy="16" r="3.2" fill="#bdbcc0"/><circle cx="14" cy="16" r="3.2" fill="#bdbcc0"/><circle cx="0" cy="-19" r="3.2" fill="#bdbcc0"/></g>
<g transform="translate(1446,127)" ><rect x="-15" y="-15" width="30" height="30" rx="3" fill="none" stroke="#7c7b7f" stroke-width="2.2" stroke-dasharray="4 3"/><path d="M-18 -18 L18 18" fill="none" stroke="#7c7b7f" stroke-width="2.2" stroke-linecap="round" stroke-linejoin="round"/></g>
<g transform="translate(1526,127)" ><rect x="-15" y="-15" width="30" height="30" rx="3" fill="none" stroke="#7c7b7f" stroke-width="2.2" stroke-dasharray="4 3"/><path d="M-17 17 L17 -17" fill="none" stroke="#7c7b7f" stroke-width="2.2" stroke-linecap="round" stroke-linejoin="round"/><path d="M17 -13 L17 14 C17 16 16 17 14 17 L-13 17 Z" fill="#7c7b7f"/></g>
<g transform="translate(1606,127)" ><rect x="-16" y="-16" width="32" height="32" rx="5" fill="none" stroke="#7c7b7f" stroke-width="2.2" stroke-linecap="round" stroke-linejoin="round"/><rect x="-10" y="-10" width="20" height="20" fill="none" stroke="#7c7b7f" stroke-width="2.2" stroke-dasharray="4 3"/></g>
<g transform="translate(1702,127)" ><path d="M-16 -10 L-16 16 L12 16" fill="none" stroke="#bdbcc0" stroke-width="2.4" stroke-linecap="round" stroke-linejoin="round"/><path d="M-16 -10 L12 16" fill="none" stroke="#9a9aa6" stroke-width="1.6" stroke-linecap="round" stroke-linejoin="round"/><path d="M2 -4 L14 -17 C16 -19 19 -16 17 -14 L5 -1 Z" fill="#bdbcc0"/><path d="M2 -4 L5 -1 L0 1 Z" fill="#bdbcc0"/></g>
<g transform="translate(1782,127)" ><path d="M-17 2 C-17 12 -9 17 0 17 C9 17 17 12 17 2 Z" fill="none" stroke="#bdbcc0" stroke-width="2.4" stroke-linejoin="round"/><path d="M2 -4 L14 -17 C16 -19 19 -16 17 -14 L5 -1 Z" fill="#bdbcc0"/><path d="M2 -4 L5 -1 L0 1 Z" fill="#bdbcc0"/></g>
<g transform="translate(1862,127)" ><path d="M-18 3 L18 3 M-18 14 L18 14 M-11 -5 L-11 20 M6 -5 L6 20" fill="none" stroke="#8b8a8e" stroke-width="1.4" stroke-linecap="round" stroke-linejoin="round"/><path d="M-11 3 L-11 14 L18 14" fill="none" stroke="#bdbcc0" stroke-width="2.6" stroke-linecap="round" stroke-linejoin="round"/><path d="M-11 3 L2 3" fill="none" stroke="#bdbcc0" stroke-width="2.6" stroke-linecap="round" stroke-linejoin="round"/><path d="M2 -4 L14 -17 C16 -19 19 -16 17 -14 L5 -1 Z" fill="#bdbcc0"/><path d="M2 -4 L5 -1 L0 1 Z" fill="#bdbcc0"/></g>
<g transform="translate(1959,127)" ><rect x="-12" y="-19" width="24" height="38" rx="4" fill="none" stroke="#bdbcc0" stroke-width="2.4" stroke-linecap="round" stroke-linejoin="round"/><rect x="-12" y="11" width="24" height="8" rx="3" fill="#bdbcc0"/><rect x="-8.0" y="-15.0" width="4" height="4" fill="#bdbcc0"/><rect x="-2.4000000000000004" y="-15.0" width="4" height="4" fill="#bdbcc0"/><rect x="3.1999999999999993" y="-15.0" width="4" height="4" fill="#bdbcc0"/><rect x="-8.0" y="-9.4" width="4" height="4" fill="#bdbcc0"/><rect x="-2.4000000000000004" y="-9.4" width="4" height="4" fill="#bdbcc0"/><rect x="-8.0" y="-3.8000000000000007" width="4" height="4" fill="#bdbcc0"/><rect x="-2.4000000000000004" y="-3.8000000000000007" width="4" height="4" fill="#bdbcc0"/><rect x="3.1999999999999993" y="-3.8000000000000007" width="4" height="4" fill="#bdbcc0"/><rect x="-8.0" y="1.7999999999999972" width="4" height="4" fill="#bdbcc0"/></g>
<g transform="translate(2054,127)" ><path d="M8 -12 C2 -17 -8 -16 -13 -9 C-18 -2 -16 8 -10 12 L-15 18 L-4 15 C4 17 12 13 15 5 C17 -1 16 -6 13 -9" fill="none" stroke="#bdbcc0" stroke-width="2.4" stroke-linecap="round" stroke-linejoin="round"/><path d="M8 -12 L16 -19 M11 -19 L16 -19 L16 -14" fill="none" stroke="#bdbcc0" stroke-width="2.2" stroke-linecap="round" stroke-linejoin="round"/><text x="-1" y="7" font-size="22" font-weight="bold" text-anchor="middle" fill="#bdbcc0">?</text></g>
<g transform="translate(2150,127)" ><rect x="-16" y="-16" width="32" height="32" rx="4" fill="none" stroke="#bdbcc0" stroke-width="2.6" stroke-linecap="round" stroke-linejoin="round"/><path d="M-9 9 L9 -9 M1 -9 L9 -9 L9 -1 M-9 1 L-9 9 L-1 9" fill="none" stroke="#bdbcc0" stroke-width="2.4" stroke-linecap="round" stroke-linejoin="round"/></g>
<rect x="301" y="161" width="1970" height="37" fill="#38363a" />
<rect x="301" y="162" width="198" height="36" fill="#4c4a4e" />
<circle cx="321" cy="180" r="5" fill="#b4b3b7"/>
<rect x="501" y="162" width="198" height="36" fill="#4c4a4e" />
<circle cx="521" cy="180" r="5" fill="#b4b3b7"/>
<rect x="701" y="162" width="198" height="36" fill="#4c4a4e" />
<path d="M715 174 L727 186 M727 174 L715 186" stroke="#b4b3b7" stroke-width="2.2"/>
<rect x="901" y="162" width="198" height="36" fill="#4c4a4e" />
<path d="M915 174 L927 186 M927 174 L915 186" stroke="#b4b3b7" stroke-width="2.2"/>
<rect x="1101" y="162" width="198" height="36" fill="#4c4a4e" />
<circle cx="1121" cy="180" r="5" fill="#b4b3b7"/>
<clipPath id="tc1"><rect x="301" y="162" width="196" height="36"/></clipPath><linearGradient id="fg1" x1="0" x2="1"><stop offset="0" stop-color="#fff"/><stop offset="0.8" stop-color="#fff"/><stop offset="1" stop-color="#555"/></linearGradient><mask id="fade1" maskUnits="userSpaceOnUse" x="301" y="162" width="196" height="36"><rect x="338" y="162" width="159" height="36" fill="url(#fg1)"/></mask>
<text x="338" y="188" font-size="23" fill="#b4b3b7" font-weight="normal" clip-path="url(#tc1)" stroke="#b4b3b7" stroke-width="0.35" textLength="160" lengthAdjust="spacingAndGlyphs" mask="url(#fade1)">Illustration[Res</text>
<text x="536.5999999999999" y="188" font-size="23" fill="#b4b3b7" font-weight="normal" stroke="#b4b3b7" stroke-width="0.35" textLength="135.6" lengthAdjust="spacingAndGlyphs">Illustration 8*</text>
<text x="736.8" y="188" font-size="23" fill="#b4b3b7" font-weight="normal" stroke="#b4b3b7" stroke-width="0.35" textLength="139.1" lengthAdjust="spacingAndGlyphs">Illustration2 4</text>
<text x="937.4" y="188" font-size="23" fill="#b4b3b7" font-weight="normal" stroke="#b4b3b7" stroke-width="0.35" textLength="138.5" lengthAdjust="spacingAndGlyphs">Illustration2 5</text>
<text x="1136.8" y="188" font-size="23" fill="#b4b3b7" font-weight="normal" stroke="#b4b3b7" stroke-width="0.35" textLength="130.2" lengthAdjust="spacingAndGlyphs">Illustration2*</text>
<rect x="1301" y="162" width="554" height="36" fill="#6b7189" />
<circle cx="1321" cy="180" r="5" fill="#d2d3d9"/>
<text x="1337.2" y="188" font-size="23" fill="#dddee3" font-weight="normal" stroke="#dddee3" stroke-width="0.35" textLength="502.8" lengthAdjust="spacingAndGlyphs">Illustration3* (A4 29.70 x 21.00cm 350dpi 49.7%)</text>
<path d="M2234 173 L2245.5 184 L2257 173" fill="none" stroke="#bdbcc0" stroke-width="2.6"/>
<rect x="301" y="198" width="1970" height="3" fill="#2d2b2e" />
<g transform="translate(2316,178)"><rect x="-16" y="-5" width="32" height="21" rx="3" fill="none" stroke="#bdbcc0" stroke-width="2.4" stroke-linecap="round" stroke-linejoin="round"/><path d="M-16 -5 L16 -5" fill="none" stroke="#bdbcc0" stroke-width="2.4" stroke-linecap="round" stroke-linejoin="round"/><path d="M-17 -10 L15 -17 L16 -12 L-16 -6 Z" fill="#bdbcc0"/><path d="M-12 -5 L-9 -1 M-5 -5 L-2 -1 M2 -5 L5 -1 M9 -5 L12 -1" fill="none" stroke="#bdbcc0" stroke-width="1.8" stroke-linecap="round" stroke-linejoin="round"/><path d="M-4 2 L6 7.5 L-4 13 Z" fill="#bdbcc0"/></g>
<g transform="translate(2316,262)"><circle r="17" fill="none" stroke="#bdbcc0" stroke-width="2.4" stroke-linecap="round" stroke-linejoin="round"/><circle cx="0" cy="-8.5" r="3" fill="#bdbcc0"/><rect x="-3" y="-3" width="6" height="14" rx="2" fill="#bdbcc0"/></g>
<rect x="301" y="201" width="1970" height="25" fill="#4f4d51" />
<rect x="301" y="226" width="27" height="1414" fill="#4f4d51" />
<rect x="328" y="227" width="1943" height="1413" fill="#2f2d31" />
<rect x="328" y="227" width="1857" height="1381" fill="#ffffff" />
<rect x="355.0" y="221" width="2" height="5" fill="#c9c8cc"/><rect x="423.5" y="221" width="2" height="5" fill="#c9c8cc"/><rect x="492.0" y="218" width="2" height="8" fill="#c9c8cc"/><rect x="560.5" y="221" width="2" height="5" fill="#c9c8cc"/><rect x="629.0" y="221" width="2" height="5" fill="#c9c8cc"/><rect x="697.5" y="221" width="2" height="5" fill="#c9c8cc"/><rect x="766.0" y="221" width="2" height="5" fill="#c9c8cc"/><rect x="834.5" y="201" width="2" height="25" fill="#c9c8cc"/><rect x="903.0" y="221" width="2" height="5" fill="#c9c8cc"/><rect x="971.5" y="221" width="2" height="5" fill="#c9c8cc"/><rect x="1040.0" y="221" width="2" height="5" fill="#c9c8cc"/><rect x="1108.5" y="221" width="2" height="5" fill="#c9c8cc"/><rect x="1177.0" y="218" width="2" height="8" fill="#c9c8cc"/><rect x="1245.5" y="221" width="2" height="5" fill="#c9c8cc"/><rect x="1314.0" y="221" width="2" height="5" fill="#c9c8cc"/><rect x="1382.5" y="221" width="2" height="5" fill="#c9c8cc"/><rect x="1451.0" y="221" width="2" height="5" fill="#c9c8cc"/><rect x="1519.5" y="201" width="2" height="25" fill="#c9c8cc"/><rect x="1588.0" y="221" width="2" height="5" fill="#c9c8cc"/><rect x="1656.5" y="221" width="2" height="5" fill="#c9c8cc"/><rect x="1725.0" y="221" width="2" height="5" fill="#c9c8cc"/><rect x="1793.5" y="221" width="2" height="5" fill="#c9c8cc"/><rect x="1862.0" y="218" width="2" height="8" fill="#c9c8cc"/><rect x="1930.5" y="221" width="2" height="5" fill="#c9c8cc"/><rect x="1999.0" y="221" width="2" height="5" fill="#c9c8cc"/><rect x="2067.5" y="221" width="2" height="5" fill="#c9c8cc"/><rect x="2136.0" y="221" width="2" height="5" fill="#c9c8cc"/><rect x="2204.5" y="201" width="2" height="25" fill="#c9c8cc"/>
<text x="840.5" y="218" font-size="15" fill="#c9c8cc" font-weight="bold" >10</text>
<text x="1525.5" y="218" font-size="15" fill="#c9c8cc" font-weight="bold" >20</text>
<text x="2210.5" y="218" font-size="15" fill="#c9c8cc" font-weight="bold" >30</text>
<rect x="328" y="201" width="2" height="26" fill="#c9c8cc"/><rect x="301" y="225" width="28" height="2" fill="#c9c8cc"/>
<rect x="2268.5" y="201" width="2.5" height="27" fill="#c9c8cc"/><rect x="2205" y="225.5" width="66" height="2.5" fill="#c9c8cc"/>
<rect x="322" y="236.5" width="6" height="2" fill="#c9c8cc"/><rect x="322" y="305.0" width="6" height="2" fill="#c9c8cc"/><rect x="322" y="373.5" width="6" height="2" fill="#c9c8cc"/><rect x="322" y="442.0" width="6" height="2" fill="#c9c8cc"/><rect x="319" y="510.5" width="9" height="2" fill="#c9c8cc"/><rect x="322" y="579.0" width="6" height="2" fill="#c9c8cc"/><rect x="322" y="647.5" width="6" height="2" fill="#c9c8cc"/><rect x="322" y="716.0" width="6" height="2" fill="#c9c8cc"/><rect x="322" y="784.5" width="6" height="2" fill="#c9c8cc"/><rect x="301" y="853.0" width="27" height="2" fill="#c9c8cc"/><rect x="322" y="921.5" width="6" height="2" fill="#c9c8cc"/><rect x="322" y="990.0" width="6" height="2" fill="#c9c8cc"/><rect x="322" y="1058.5" width="6" height="2" fill="#c9c8cc"/><rect x="322" y="1127.0" width="6" height="2" fill="#c9c8cc"/><rect x="319" y="1195.5" width="9" height="2" fill="#c9c8cc"/><rect x="322" y="1264.0" width="6" height="2" fill="#c9c8cc"/><rect x="322" y="1332.5" width="6" height="2" fill="#c9c8cc"/><rect x="322" y="1401.0" width="6" height="2" fill="#c9c8cc"/><rect x="322" y="1469.5" width="6" height="2" fill="#c9c8cc"/><rect x="301" y="1538.0" width="27" height="2" fill="#c9c8cc"/><rect x="322" y="1606.5" width="6" height="2" fill="#c9c8cc"/>
<text x="0" y="0" font-size="15" font-weight="bold" fill="#c9c8cc" transform="translate(321,878) rotate(-90)">10</text>
<text x="0" y="0" font-size="15" font-weight="bold" fill="#c9c8cc" transform="translate(321,1563) rotate(-90)">20</text>
<rect x="301" y="1635.5" width="29" height="2.5" fill="#c9c8cc"/><rect x="327.5" y="1606" width="2.5" height="32" fill="#c9c8cc"/>
<defs><g id="wedge" fill="none" stroke="#959595" stroke-width="1.9" stroke-linecap="round" stroke-linejoin="round"><path d="M29.0 -76.0 C30.3 -80.0 31.6 -83.5 33.0 -88.0 C34.4 -92.5 36.3 -96.4 37.6 -103.3 C38.9 -110.2 40.5 -122.1 40.9 -129.6 C41.3 -137.1 40.5 -142.4 39.9 -148.4 C39.3 -154.4 38.2 -159.8 37.1 -165.3 C36.0 -170.8 34.6 -176.0 33.4 -181.3"/><path d="M33.4 -181.3 C36.4 -179.4 38.5 -177.3 42.3 -175.7 C46.1 -174.1 51.5 -171.9 56.4 -171.9 C61.2 -171.9 66.4 -173.3 71.4 -175.7 C76.4 -178.0 82.0 -182.2 86.5 -186.0 C91.0 -189.8 94.6 -194.5 98.7 -198.7"/><path d="M97.7 -201.0 C97.9 -204.8 99.1 -208.2 98.2 -212.3 C97.3 -216.4 95.0 -222.2 92.1 -225.5 C89.2 -228.8 84.6 -231.5 80.8 -232.0 C77.0 -232.5 72.3 -230.6 69.5 -228.3 C66.7 -226.0 64.4 -221.1 63.9 -218.0 C63.4 -214.9 64.8 -211.5 66.7 -209.5 C68.6 -207.5 72.4 -207.3 75.2 -206.2"/><path d="M75.2 -206.2 C70.5 -205.1 65.7 -202.6 61.0 -203.0 C56.3 -203.4 50.4 -205.6 47.0 -208.6 C43.6 -211.6 41.6 -215.8 40.5 -221.0 C39.4 -226.2 38.9 -234.4 40.1 -239.5 C41.3 -244.6 45.1 -248.7 47.6 -251.8 C50.1 -254.9 52.0 -256.4 55.1 -257.9 C58.2 -259.4 62.6 -259.8 66.4 -260.7"/><path d="M66.4 -260.7 C64.5 -263.7 62.5 -265.8 60.8 -269.6 C59.1 -273.4 57.0 -279.0 56.1 -283.7 C55.2 -288.4 54.3 -292.8 55.1 -297.8 C55.9 -302.8 58.6 -309.7 60.8 -313.8 C63.0 -317.9 65.9 -319.9 68.3 -322.2 C70.7 -324.5 73.0 -325.7 75.3 -327.4"/><path d="M75.3 -327.4 C73.9 -323.8 72.0 -320.9 71.1 -316.6 C70.2 -312.3 69.2 -306.6 69.7 -301.6 C70.2 -296.6 71.5 -291.2 73.9 -286.5 C76.3 -281.8 80.0 -276.4 84.2 -273.4 C88.4 -270.4 93.3 -268.5 99.3 -268.7 C105.3 -268.9 113.4 -272.8 120.4 -274.8"/><path d="M120.4 -274.8 C116.5 -277.5 112.9 -279.6 108.7 -282.8 C104.5 -286.0 99.4 -290.2 95.5 -294.0 C91.6 -297.8 88.6 -301.5 85.2 -305.3"/><path d="M85.2 -305.3 C90.2 -304.8 95.4 -303.6 100.2 -303.9 C105.0 -304.2 106.3 -303.5 114.0 -307.1 C121.7 -310.7 135.8 -318.2 146.6 -325.5 C157.4 -332.8 171.4 -343.3 179.1 -350.7 C186.8 -358.1 189.4 -363.4 193.0 -370.0 C196.6 -376.6 198.1 -383.5 200.7 -390.2"/><path d="M1.5 -337.5 C3.9 -348.2 6.0 -360.0 8.8 -369.6 C11.6 -379.2 14.8 -387.2 18.2 -395.0 C21.6 -402.8 25.7 -410.0 29.5 -416.6 C33.3 -423.2 37.0 -428.5 40.8 -434.5"/><path d="M25.7 -413.3 C37.9 -412.7 52.7 -411.8 62.4 -411.4 C72.1 -411.0 75.4 -412.1 84.0 -411.0 C92.6 -409.9 104.0 -406.9 114.0 -404.9"/><path d="M117.8 -408.2 C125.2 -406.0 131.3 -404.3 140.0 -401.6 C148.7 -398.9 160.0 -395.2 170.0 -392.0"/><path d="M52.5 -430.7 C54.2 -426.0 54.8 -421.3 57.7 -416.6 C60.6 -411.9 64.7 -406.9 69.9 -402.5 C75.1 -398.1 81.7 -393.6 88.7 -390.3 C95.8 -387.0 103.7 -384.1 112.2 -382.8 C120.8 -381.6 133.2 -381.9 140.0 -382.8 C146.8 -383.7 149.5 -386.1 153.0 -388.0 C156.5 -389.9 159.0 -392.0 161.0 -394.0 C163.0 -396.0 163.7 -398.0 165.0 -400.0"/><path d="M59.5 -427.0 C73.0 -426.0 89.5 -425.1 100.0 -424.0 C110.5 -422.9 115.0 -421.7 122.5 -420.5"/><path d="M0.0 -40.0 C2.4 -40.2 4.7 -40.6 7.2 -40.7 C9.6 -40.7 12.6 -40.6 14.6 -40.2 C16.7 -39.9 18.6 -39.4 19.7 -38.6 C20.7 -37.7 21.0 -36.4 21.1 -35.1 C21.2 -33.8 20.5 -32.4 20.1 -31.0"/><path d="M6.0 -37.0 C7.0 -35.8 8.0 -34.5 9.0 -33.5 C10.0 -32.5 11.0 -31.8 12.0 -31.0"/><circle cx="0" cy="-327" r="10"/><circle cx="1" cy="-326" r="8.5" stroke-width="1.5"/><circle cx="160.5" cy="-278" r="5" stroke-width="2.6"/><circle cx="161" cy="-279" r="3" stroke-width="1.5"/></g><g id="half"><use href="#wedge"/><use href="#wedge" transform="scale(-1,1)"/></g></defs>
<clipPath id="cvclip"><rect x="328" y="227" width="1857" height="1381"/></clipPath>
<g clip-path="url(#cvclip)"><g transform="translate(1156,813)"><use href="#half" transform="rotate(0)"/><use href="#half" transform="rotate(60)"/><use href="#half" transform="rotate(120)"/><use href="#half" transform="rotate(180)"/><use href="#half" transform="rotate(240)"/><use href="#half" transform="rotate(300)"/><g fill="none" stroke="#929292" stroke-linecap="round"><circle r="35.5" stroke-width="2.2"/><circle r="71.5" stroke-width="2"/><circle r="80.5" stroke-width="2.4" stroke="#a0a0a0"/><circle r="78.5" stroke-width="1.4" stroke="#b0b0b0" stroke-dasharray="30 25"/><circle r="82" stroke-width="1.2" stroke="#b8b8b8" stroke-dasharray="20 35" stroke-dashoffset="10"/><circle r="432" stroke-width="2"/><circle r="426" stroke-width="1.2" stroke="#b0b0b0" stroke-dasharray="60 40"/><circle r="438" stroke-width="1.4" stroke="#a8a8a8" stroke-dasharray="45 70" stroke-dashoffset="20"/><ellipse rx="517" ry="514.5" stroke-width="2.4" stroke="#959595"/><circle r="511" stroke-width="1.3" stroke="#b0b0b0" stroke-dasharray="90 60"/><circle r="521" stroke-width="1.2" stroke="#b8b8b8" stroke-dasharray="50 90" stroke-dashoffset="35"/></g></g></g>
<clipPath id="vpclip"><rect x="328" y="227" width="1943" height="1413"/></clipPath>
<path d="M-844.0 813.0 L3156.0 813.0 M-576.1 -187.0 L2888.1 1813.0 M156.0 -919.1 L2156.0 2545.1 M1156.0 -1187.0 L1156.0 2813.0 M2156.0 -919.1 L156.0 2545.1 M2888.1 -187.0 L-576.1 1813.0 " stroke="#56398a" stroke-width="1.5" clip-path="url(#vpclip)"/>
<path d="M-844.0 813.0 L3156.0 813.0 M-576.1 -187.0 L2888.1 1813.0 M156.0 -919.1 L2156.0 2545.1 M1156.0 -1187.0 L1156.0 2813.0 M2156.0 -919.1 L156.0 2545.1 M2888.1 -187.0 L-576.1 1813.0 " stroke="#b08cf0" stroke-width="1.25" clip-path="url(#cvclip)"/>
<circle cx="1156" cy="813" r="3" fill="#c3a1f4"/>
<g stroke="#7a7a7a" stroke-width="2.2"><path d="M1300.5 912 L1300.5 920.5 M1300.5 944 L1300.5 952.5 M1280 932.2 L1289 932.2 M1312 932.2 L1321 932.2"/></g><circle cx="1300.5" cy="932.2" r="1.6" fill="#8a8a8a"/>
</svg>
</body></html>
